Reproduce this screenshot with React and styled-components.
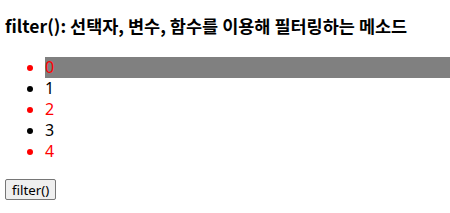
import React from "react";
import styled, { createGlobalStyle } from "styled-components";

const items = [0, 1, 2, 3, 4];

const App = () => {
  return (
    <Page>
      <GlobalStyle />
      <Title>filter(): 선택자, 변수, 함수를 이용해 필터링하는 메소드</Title>
      <List>
        {items.map((n) => (
          <Item key={n} even={n % 2 === 0} first={n === 0}>
            {n}
          </Item>
        ))}
      </List>
      <Button>filter()</Button>
    </Page>
  );
};

export default App;

const GlobalStyle = createGlobalStyle`
  body {
    margin: 0;
    background: #fff;
    font-family: "Noto Sans", "Noto Sans CJK KR", sans-serif;
    color: #000;
  }
`;

const Page = styled.div`
  display: flex;
  flex-direction: column;
  align-items: flex-start;
  padding: 15px 0 0 5px;
`;

const Title = styled.h3`
  margin: 0;
  font-size: 17.5px;
  line-height: 22px;
  font-weight: 700;
  font-family: "Noto Sans CJK KR", "Noto Sans", sans-serif;
  white-space: nowrap;
`;

const List = styled.ul`
  align-self: stretch;
  margin: 20px 0 0 0;
  padding: 0 0 0 40px;
  list-style: disc;
`;

const Item = styled.li`
  font-size: 16px;
  line-height: 21px;
  color: ${(p) => (p.even ? "#ff0000" : "#000")};
  background: ${(p) => (p.first ? "#808080" : "transparent")};
`;

const Button = styled.button`
  margin-top: 17px;
  height: 21px;
  padding: 0 6px;
  font-family: "Noto Sans", sans-serif;
  font-size: 13.33px;
  color: #000;
  background: #efefef;
  border: 1px solid #767676;
  border-radius: 2px;
`;
